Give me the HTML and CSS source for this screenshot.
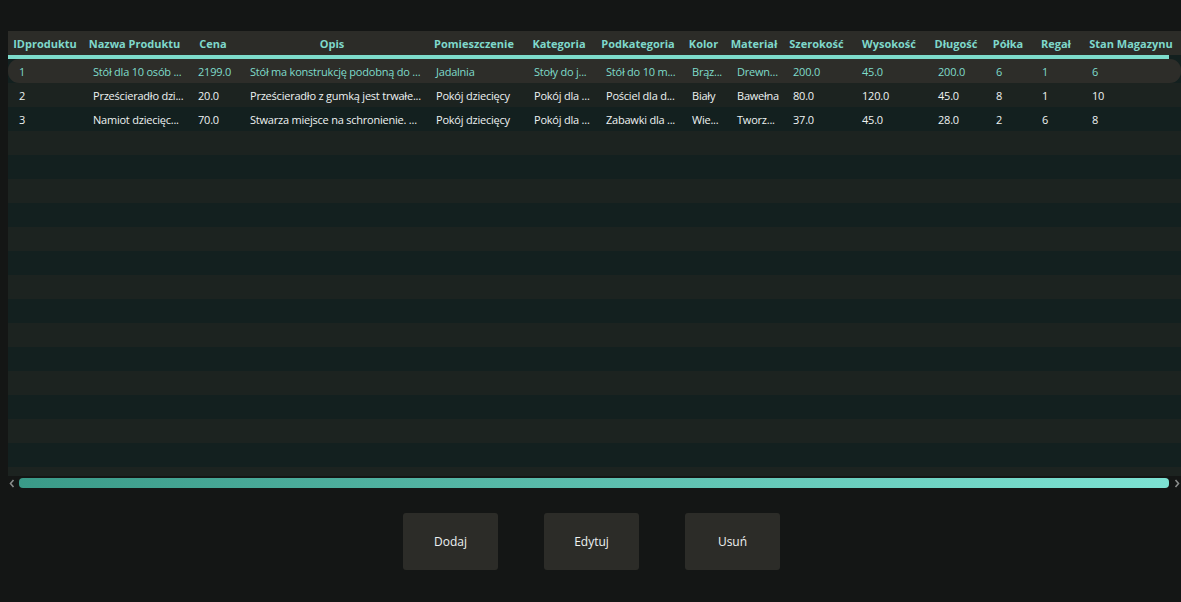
FILE: index.html
```html
<!DOCTYPE html>
<html lang="pl">
<head>
<meta charset="utf-8">
<title>Produkty</title>
<link rel="stylesheet" href="styles.css">
</head>
<body>
<div class="app">
  <div class="table">
    <div class="row hdr">
      <div class="c">IDproduktu</div><div class="c">Nazwa Produktu</div><div class="c">Cena</div><div class="c">Opis</div><div class="c">Pomieszczenie</div><div class="c">Kategoria</div><div class="c">Podkategoria</div><div class="c">Kolor</div><div class="c">Materiał</div><div class="c">Szerokość</div><div class="c">Wysokość</div><div class="c">Długość</div><div class="c">Półka</div><div class="c">Regał</div><div class="c">Stan Magazynu</div>
    </div>
    <div class="hline"></div>
    <div class="rows">
      <div class="row data sel">
        <div class="c">1</div><div class="c">Stół dla 10 osób ...</div><div class="c">2199.0</div><div class="c">Stół ma konstrukcję podobną do ...</div><div class="c">Jadalnia</div><div class="c">Stoły do j...</div><div class="c">Stół do 10 m...</div><div class="c">Brąz...</div><div class="c">Drewn...</div><div class="c">200.0</div><div class="c">45.0</div><div class="c">200.0</div><div class="c">6</div><div class="c">1</div><div class="c">6</div>
      </div>
      <div class="row data">
        <div class="c">2</div><div class="c">Prześcieradło dzi...</div><div class="c">20.0</div><div class="c">Prześcieradło z gumką jest trwałe...</div><div class="c">Pokój dziecięcy</div><div class="c">Pokój dla ...</div><div class="c">Pościel dla d...</div><div class="c">Biały</div><div class="c">Bawełna</div><div class="c">80.0</div><div class="c">120.0</div><div class="c">45.0</div><div class="c">8</div><div class="c">1</div><div class="c">10</div>
      </div>
      <div class="row data">
        <div class="c">3</div><div class="c">Namiot dziecięc...</div><div class="c">70.0</div><div class="c">Stwarza miejsce na schronienie. ...</div><div class="c">Pokój dziecięcy</div><div class="c">Pokój dla ...</div><div class="c">Zabawki dla ...</div><div class="c">Wie...</div><div class="c">Tworz...</div><div class="c">37.0</div><div class="c">45.0</div><div class="c">28.0</div><div class="c">2</div><div class="c">6</div><div class="c">8</div>
      </div>
      <div class="row"></div><div class="row"></div><div class="row"></div><div class="row"></div><div class="row"></div>
      <div class="row"></div><div class="row"></div><div class="row"></div><div class="row"></div><div class="row"></div>
      <div class="row"></div><div class="row"></div><div class="row"></div><div class="row"></div><div class="row"></div>
    </div>
  </div>
  <div class="hscroll">
    <svg class="arrow" width="6" height="9" viewBox="0 0 6 9"><path d="M4.5 1 L1.5 4.5 L4.5 8" fill="none" stroke="#8a8d8c" stroke-width="1.6"/></svg>
    <div class="thumb"></div>
    <svg class="arrow" width="6" height="9" viewBox="0 0 6 9"><path d="M1.5 1 L4.5 4.5 L1.5 8" fill="none" stroke="#8a8d8c" stroke-width="1.6"/></svg>
  </div>
  <div class="buttons">
    <button class="btn">Dodaj</button>
    <button class="btn">Edytuj</button>
    <button class="btn">Usuń</button>
  </div>
</div>
</body>
</html>
```

FILE: styles.css
```css
html, body {
  margin: 0;
  padding: 0;
  background: #141615;
  overflow: hidden;
}
body {
  font-family: "Open Sans", "Noto Sans", sans-serif;
  font-size: 11px;
  color: #eef2f2;
}
.app {
  width: 1181px;
  height: 602px;
  padding-top: 31px;
  box-sizing: border-box;
}
.table {
  margin-left: 8px;
  width: 1173px;
  height: 445px;
  overflow: hidden;
  background: #13201f;
}
.row {
  display: grid;
  grid-template-columns: 74px 105px 52px 186px 98px 72px 86px 45px 56px 69px 76px 58px 46px 50px 100px;
  height: 24px;
  align-items: center;
}
.rows {
  height: 417px;
  overflow: hidden;
  letter-spacing: -0.22px;
}
.rows .row:nth-child(even) { background: #1c2320; }
.rows .row:nth-child(odd) { background: #13201f; }
.rows .row.sel {
  background: #2d2d29;
  border-radius: 11px;
  color: #7fdccb;
}
.hdr {
  background: #2c2c28;
  color: #7fd8cb;
  font-weight: 700;
}
.hdr .c {
  text-align: center;
  padding: 0;
}
.c {
  padding-left: 11px;
  white-space: nowrap;
  overflow: hidden;
}
.hline {
  width: 1161px;
  height: 4px;
  background: #7ddccb;
}
.hscroll {
  display: flex;
  align-items: center;
  height: 10px;
  margin-top: 2px;
  padding-left: 9px;
}
.arrow { flex: none; }
.thumb {
  width: 1150px;
  height: 10px;
  margin: 0 5px 0 4px;
  border-radius: 4px;
  background: linear-gradient(to right, #3a9a88, #7de2d3);
}
.buttons {
  display: flex;
  justify-content: center;
  gap: 46px;
  margin-top: 25px;
  padding-left: 2px;
}
.btn {
  width: 95px;
  height: 57px;
  background: #2c2c28;
  border: none;
  border-radius: 3px;
  color: #eef2f2;
  font-family: "Open Sans", "Noto Sans", sans-serif;
  font-size: 12px;
  padding: 0;
}
```
